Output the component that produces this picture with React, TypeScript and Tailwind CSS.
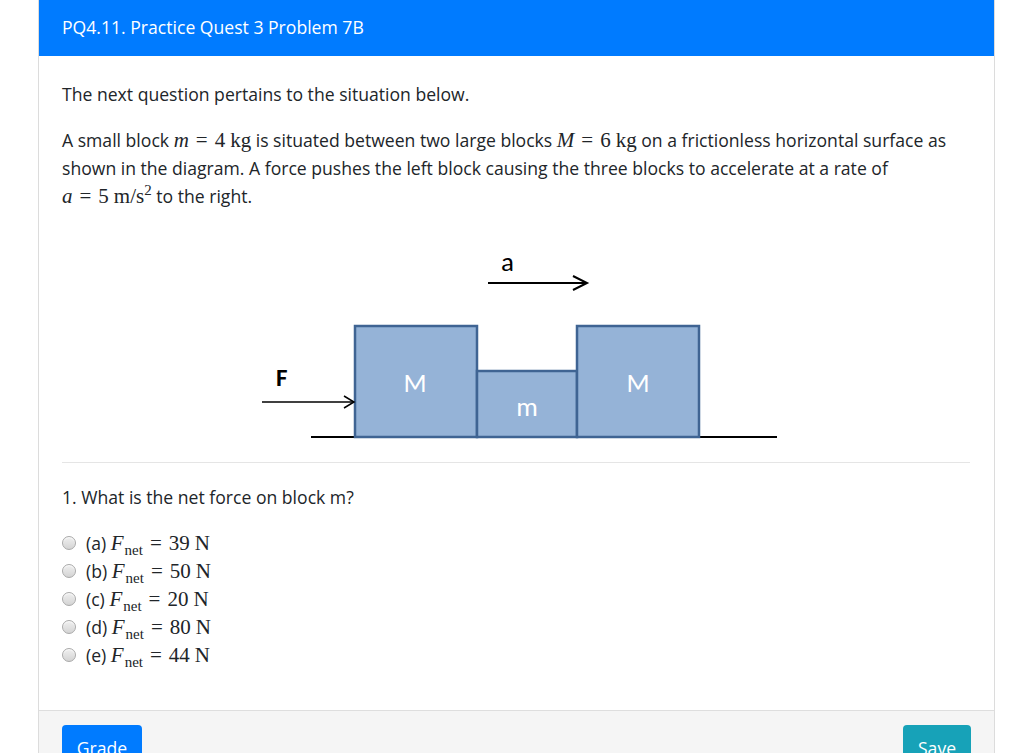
import React from "react";

const Serif = "font-['Liberation_Serif','Times_New_Roman',serif]";

function M({ children }: { children: React.ReactNode }) {
  return <span className={`${Serif} text-[21px] leading-none whitespace-nowrap`}>{children}</span>;
}
function I({ children }: { children: React.ReactNode }) {
  return <span className="italic">{children}</span>;
}
function Eq() {
  return <span className="mx-[7px]">=</span>;
}
function Sp() {
  return <span className="inline-block w-[5px]" />;
}

function Radio() {
  return (
    <span className="inline-block w-[14px] h-[14px] rounded-full border border-[#a9a9a9] bg-gradient-to-b from-[#f0f0f0] to-[#d4d4d4] shadow-[inset_0_1px_1px_rgba(255,255,255,0.8)] mr-[10px] shrink-0" />
  );
}

function Option({ label, value }: { label: string; value: string }) {
  return (
    <div className="flex items-center h-[28px]">
      <Radio />
      <span>{label}&nbsp;</span>
      <M>
        <I>F</I>
        <span className="text-[15px] relative top-[5px] ml-[1px]">net</span>
        <Eq />
        {value}
        <Sp />N
      </M>
    </div>
  );
}

function Diagram() {
  const ox = 62;
  const oy = 230;
  const X = (x: number) => x - ox;
  const Y = (y: number) => y - oy;
  const fill = "#95b3d7";
  const stroke = "#3f6493";
  return (
    <svg width="908" height="220" className="block" style={{ fontFamily: "Carlito, 'Open Sans', Arial, sans-serif" }}>
      <text x={X(501)} y={Y(271)} fontSize="27" fill="#000">a</text>
      <line x1={X(488)} y1={Y(283)} x2={X(586)} y2={Y(283)} stroke="#000" strokeWidth="2" />
      <polyline points={`${X(573)},${Y(276)} ${X(587)},${Y(283)} ${X(573)},${Y(290)}`} fill="none" stroke="#000" strokeWidth="2" />
      <line x1={X(311)} y1={Y(437)} x2={X(777)} y2={Y(437)} stroke="#000" strokeWidth="2" />
      <rect x={X(355)} y={Y(326)} width={122} height={111} fill={fill} stroke={stroke} strokeWidth="2.5" />
      <rect x={X(477)} y={Y(371)} width={100} height={66} fill={fill} stroke={stroke} strokeWidth="2.5" />
      <rect x={X(577)} y={Y(326)} width={122} height={111} fill={fill} stroke={stroke} strokeWidth="2.5" />
      <text x={X(415)} y={Y(392)} fontSize="27" fill="#fff" textAnchor="middle">M</text>
      <text x={X(527)} y={Y(416)} fontSize="27" fill="#fff" textAnchor="middle">m</text>
      <text x={X(638)} y={Y(392)} fontSize="27" fill="#fff" textAnchor="middle">M</text>
      <text x={X(276)} y={Y(386)} fontSize="25" fontWeight="bold" fill="#000">F</text>
      <line x1={X(262)} y1={Y(402)} x2={X(353)} y2={Y(402)} stroke="#000" strokeWidth="1.5" />
      <polyline points={`${X(344)},${Y(396)} ${X(354)},${Y(402)} ${X(344)},${Y(408)}`} fill="none" stroke="#000" strokeWidth="1.5" />
    </svg>
  );
}

export default function App() {
  return (
    <div className="w-[1024px] h-[753px] overflow-hidden bg-white font-['Open_Sans','Noto_Sans',sans-serif] text-[17.6px] text-[#212529]">
      <div className="ml-[38px] w-[957px] h-[800px] border-x border-[#dcdcdc] flex flex-col">
        <div className="h-[56px] bg-[#007bff] text-white flex items-center px-[23px] pb-[2px]">
          PQ4.11. Practice Quest 3 Problem 7B
        </div>
        <div className="h-[654px] px-[23px] pt-[24px] leading-[28px]">
          <p>The next question pertains to the situation below.</p>
          <p className="mt-[18px]">
            A small block <M><I>m</I><Eq />4<Sp />kg</M> is situated between two large blocks{" "}
            <M><I>M</I><Eq />6<Sp />kg</M> on a frictionless horizontal surface as shown in the diagram. A force
            pushes the left block causing the three blocks to accelerate at a rate of{" "}
            <M><I>a</I><Eq />5<Sp />m/s<span className="text-[15px] align-[8px]">2</span></M> to the right.
          </p>
          <div className="mt-[20px]">
            <Diagram />
          </div>
          <div className="mt-[12px] border-t border-[#e5e5e5] w-[908px]" />
          <p className="mt-[20px]">1. What is the net force on block m?</p>
          <div className="mt-[18px]">
            <Option label="(a)" value="39" />
            <Option label="(b)" value="50" />
            <Option label="(c)" value="20" />
            <Option label="(d)" value="80" />
            <Option label="(e)" value="44" />
          </div>
        </div>
        <div className="border-t border-[#dedede] bg-[#f5f5f5] px-[23px] pt-[14px] flex justify-between flex-1">
          <button className="h-[42px] w-[80px] rounded-[4px] bg-[#007bff] text-white text-[17.6px] pt-[4px] self-start">Grade</button>
          <button className="h-[42px] w-[68px] rounded-[4px] bg-[#17a2b8] text-white text-[17.6px] pt-[4px] self-start">Save</button>
        </div>
      </div>
    </div>
  );
}
